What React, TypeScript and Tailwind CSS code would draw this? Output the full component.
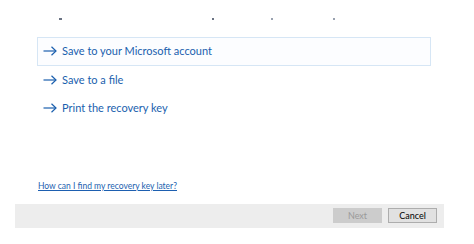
const options = ['Save to your Microsoft account', 'Save to a file', 'Print the recovery key']

function Arrow() {
  return (
    <svg width="14" height="10" viewBox="0 0 14 10" fill="none" stroke="#1a5fae" strokeWidth="1.2">
      <path d="M0.5 5h12.5" />
      <path d="M8.5 0.8L13 5l-4.5 4.2" />
    </svg>
  )
}

export default function App() {
  return (
    <div className="w-[474px] h-[244px] bg-white font-['Lato',sans-serif] overflow-hidden">
      <div className="flex items-center h-[37px] pl-[59px]">
        <span className="w-[3px] h-[2px] bg-gray-500" />
        <span className="ml-[150px] w-[2px] h-[2px] bg-gray-500" />
        <span className="ml-[57px] w-[2px] h-[2px] bg-gray-400" />
        <span className="ml-[60px] w-[2px] h-[2px] bg-gray-400" />
      </div>

      <div className="flex flex-col ml-[37px] mr-[43px]">
        {options.map((label, i) => (
          <div
            key={label}
            className={
              'flex items-center h-[28.5px] pl-[5px] border ' +
              (i === 0 ? 'border-[#d6e6f5] bg-[#fcfdff]' : 'border-transparent')
            }
          >
            <Arrow />
            <span className="ml-[5px] text-[11px] text-[#1a5fae]">{label}</span>
          </div>
        ))}
      </div>

      <div className="mt-[57px] ml-[38px] text-[8.5px] leading-[12px] text-[#1d5fb0] underline">
        How can I find my recovery key later?
      </div>

      <div className="mt-[12px] ml-[15px] mr-[30px] h-[24px] bg-[#ededed] flex items-center justify-end pr-[7px] gap-[6px]">
        <button className="w-[49px] h-[15px] bg-[#cccccc] text-[#9a9a9a] text-[9px] leading-none">Next</button>
        <button className="w-[49px] h-[15px] bg-[#e1e1e1] border border-[#adadad] text-black text-[9px] leading-none">Cancel</button>
      </div>
    </div>
  )
}
